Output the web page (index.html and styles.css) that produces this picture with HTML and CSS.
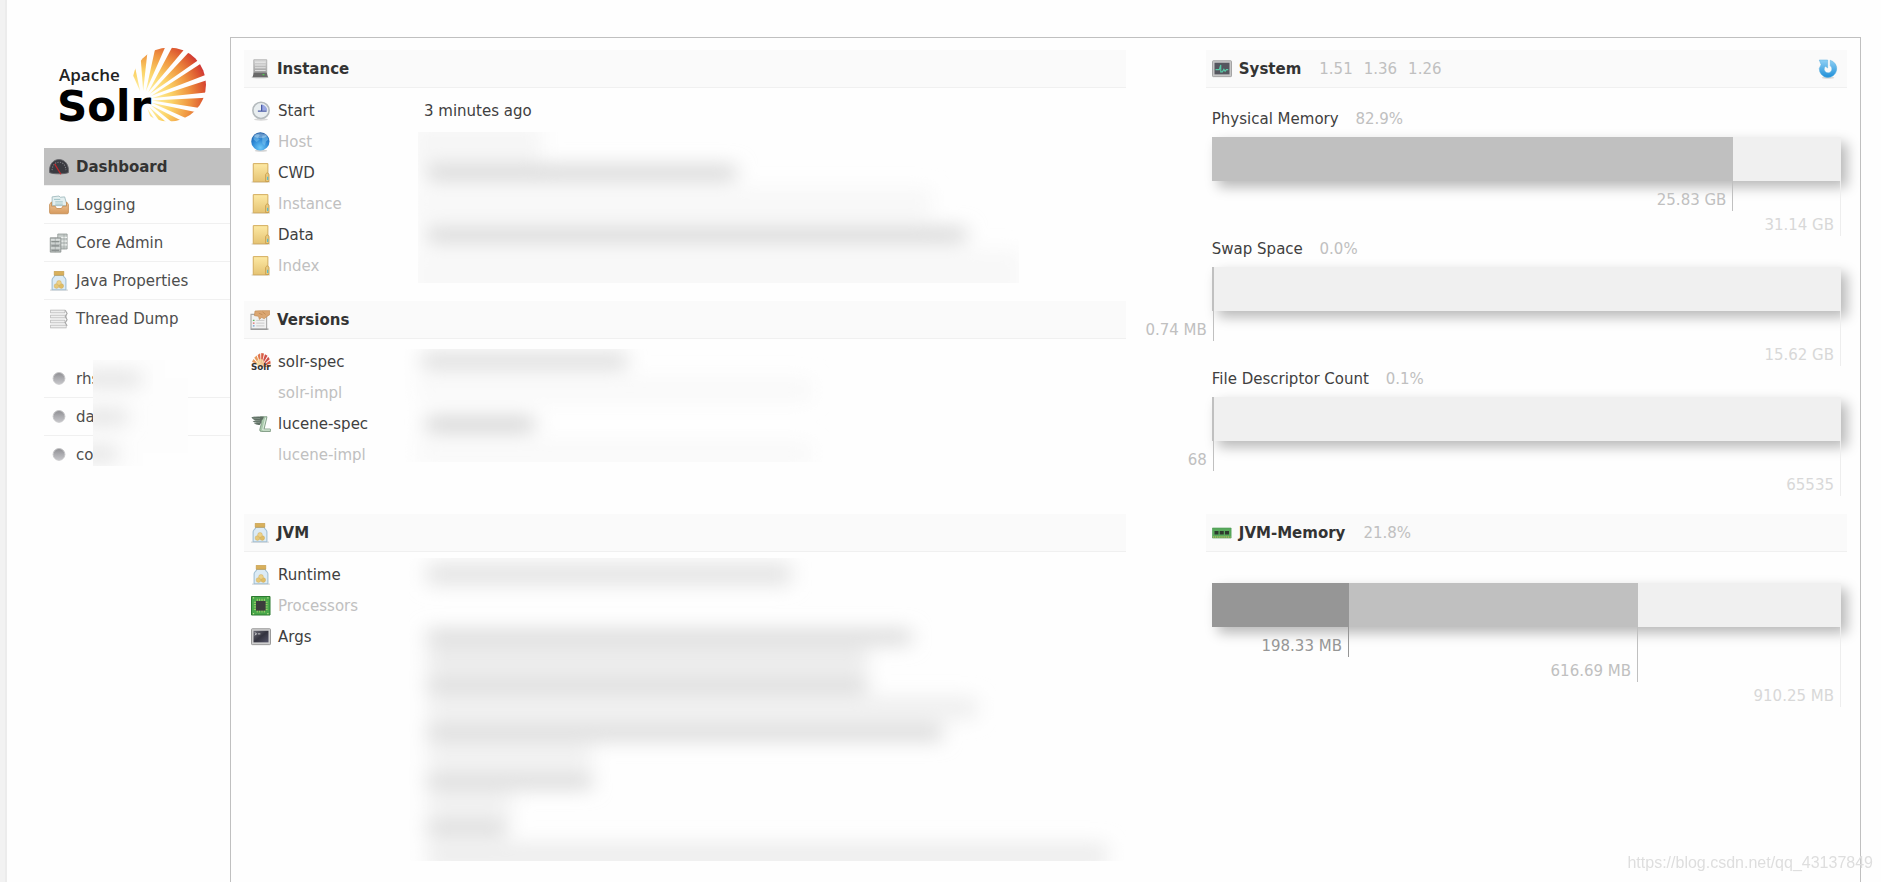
FILE: index.html
```html
<!DOCTYPE html>
<html lang="en">

<head>
    <meta charset="UTF-8">
    <meta name="viewport" content="width=device-width, initial-scale=1.0">
    <title>Solr Admin</title>
    <link rel="stylesheet" href="styles.css">
</head>

<body>

    <!-- icon sprite -->
    <svg class="sprite" width="0" height="0">
        <defs>
            <linearGradient id="g-folder" x1="0" y1="0" x2="0" y2="1"><stop offset="0" stop-color="#fde9a4"/><stop offset="1" stop-color="#e5c373"/></linearGradient>
            <linearGradient id="g-metal" x1="0" y1="0" x2="0" y2="1"><stop offset="0" stop-color="#dcdcdc"/><stop offset="1" stop-color="#9a9a9a"/></linearGradient>
            <linearGradient id="g-wood" x1="0" y1="0" x2="0" y2="1"><stop offset="0" stop-color="#f3c89b"/><stop offset="1" stop-color="#d69a5e"/></linearGradient>
            <linearGradient id="g-blue" x1="0" y1="0" x2="0" y2="1"><stop offset="0" stop-color="#8fd0f5"/><stop offset="1" stop-color="#1f8fd8"/></linearGradient>
            <radialGradient id="g-globe" cx=".5" cy=".85" r=".8"><stop offset="0" stop-color="#6cc8f8"/><stop offset=".6" stop-color="#2b86d4"/><stop offset="1" stop-color="#1d5fa8"/></radialGradient>
            <linearGradient id="g-dot" x1="0" y1="0" x2="0" y2="1"><stop offset="0" stop-color="#8e8e92"/><stop offset=".45" stop-color="#a9a9ad"/><stop offset="1" stop-color="#c6c6ca"/></linearGradient>
            <linearGradient id="g-screen" x1="0" y1="0" x2="1" y2="1"><stop offset="0" stop-color="#6b6b75"/><stop offset=".5" stop-color="#34343f"/><stop offset="1" stop-color="#55556a"/></linearGradient>
            <radialGradient id="g-sun" gradientUnits="userSpaceOnUse" cx="0" cy="0" r="72"><stop offset=".1" stop-color="#fff6b0"/><stop offset=".4" stop-color="#fbd266"/><stop offset=".65" stop-color="#ef9440"/><stop offset=".85" stop-color="#dc5530"/><stop offset="1" stop-color="#c41e3a"/></radialGradient>
            <filter id="f-soft" x="-20%" y="-30%" width="140%" height="160%"><feGaussianBlur stdDeviation="10 9"/></filter>
        </defs>

        <symbol id="i-server" viewBox="0 0 16 16">
            <ellipse cx="8" cy="14.6" rx="7" ry="1" fill="#d5d5d5"/>
            <path d="M3 .6h10.400v11H3z" fill="url(#g-metal)" stroke="#a5a5a5" stroke-width=".6"/>
            <path d="M4 2.600h8.500M4 4.800h8.500M4 7h8.500M4 9.200h8.500" stroke="#f2f2f2" stroke-width=".6"/>
            <path d="M3 11h10.400l1 3.600H2z" fill="#6a6a6a"/>
            <path d="M10 12.5h1.6" stroke="#4fd04f" stroke-width=".9"/>
        </symbol>
        <symbol id="i-clock" viewBox="0 0 16 16">
            <ellipse cx="8" cy="14.8" rx="5.5" ry=".9" fill="#d8d8d8"/>
            <circle cx="8" cy="7.5" r="6.500" fill="#e9eef0" stroke="#b4babd" stroke-width="1.300"/>
            <path d="M8.500 2.800A5 5 0 0 1 13 7.600H8.500z" fill="#9aa7e2"/>
            <path d="M8.500 3v5.500M5.500 8h7" fill="none" stroke="#4a5ba6" stroke-width="1"/>
        </symbol>
        <symbol id="i-globe" viewBox="0 0 16 16">
            <ellipse cx="8" cy="15" rx="5" ry=".8" fill="#d4d4d4"/>
            <circle cx="7.5" cy="7.5" r="7.3" fill="url(#g-globe)"/>
            <path d="M2 4c2-2.500 4-2.800 5-1.500l-1.500 2L7 6 4.500 8 2 6zM9 3l3.500-.5L14 6l-2 1.500-1 3.500-2-2V6z" fill="#7cc4f0" opacity=".55"/>
            <ellipse cx="7.500" cy="3" rx="5" ry="2" fill="#fff" opacity=".3"/>
        </symbol>
        <symbol id="i-folder" viewBox="0 0 16 16">
            <path d="M.5 15.200h14.500" stroke="#d0c8b8" stroke-width=".8"/>
            <path d="M1.800.5h11.700v14.500H1.800z" fill="url(#g-folder)" stroke="#d3ac5c" stroke-width=".8"/>
            <path d="M11.700 14.800V9.200c.7-1.900 2.700-1.300 2.700.3v5.300z" fill="#e9cb80" stroke="#c79d4c" stroke-width=".7"/>
            <path d="M13.300 11v2.500" stroke="#5bbccb" stroke-width="1"/>
        </symbol>
        <symbol id="i-gauge" viewBox="0 0 16 16">
            <path d="M.5 12.500C-.3 6 3.500 2 8 2s8.300 4 7.500 10.500c-3 1.300-12 1.300-15 0z" fill="#3a3a40" stroke="#66666a" stroke-width=".7"/>
            <path d="M2.500 10.500C2.600 6.500 5 4.200 8 4.200s5.400 2.300 5.500 6.300" fill="none" stroke="#7d7d83" stroke-width=".9" stroke-dasharray="1 1"/>
            <path d="M4.500 5.500l5 8.300" stroke="#c0282c" stroke-width="1"/>
        </symbol>
        <symbol id="i-inbox" viewBox="0 0 16 16">
            <path d="M2.500 1.500L8 .8l1 1 3.500-.3 2 7h-12z" fill="#e4eff0" stroke="#9fb9bd" stroke-width=".7"/>
            <path d="M4 3.500h5M5 5.500h6M5 7.300h6" stroke="#9fc3c6" stroke-width=".8"/>
            <path d="M.5 7.500L2 5.500V9h3l1 1.800h4L11 9h3V5.500l1.500 2V14q0 1-1 1h-13q-1 0-1-1z" fill="url(#g-wood)" stroke="#c68f56" stroke-width=".7"/>
        </symbol>
        <symbol id="i-cores" viewBox="0 0 16 16">
            <path d="M7 .8h7.500v12H7z" fill="#c2c8c6" stroke="#8f9694" stroke-width=".6"/>
            <path d="M7.500 3.500h7M7.500 6.500h7M7.500 9.500h7" stroke="#eef1f0" stroke-width=".9"/>
            <path d="M1 3.800h8.500v11.500H1z" fill="#b5bab9" stroke="#868c8a" stroke-width=".6"/>
            <path d="M1.500 5.500h7.500M1.500 8h7.500M1.500 12h7.500" stroke="#e8ebea" stroke-width=".9"/>
            <path d="M2 7h6M2 10.300h6M2 13.800h6" stroke="#7e8482" stroke-width=".8"/>
            <path d="M5 3.800v11.500M12 1v12" stroke="#8e9593" stroke-width=".4"/>
        </symbol>
        <symbol id="i-jar" viewBox="0 0 16 16">
            <path d="M.8 15.300h14.400" stroke="#d2d2d2" stroke-width=".8"/>
            <path d="M4.500 3.500h7c0 1.500 2 1.700 2 3.500v8h-11V7c0-1.800 2-2 2-3.500z" fill="#dcebf5" stroke="#a3c0d4" stroke-width=".9"/>
            <path d="M4.200.2h7.600v3.200H4.200z" fill="#d8b05c" stroke="#c19740" stroke-width=".5"/>
            <g stroke="#c9a24a" stroke-width=".3"><circle cx="6" cy="12" r="1.900" fill="#e6c878"/><circle cx="9.800" cy="12" r="1.900" fill="#dfbd66"/><circle cx="8" cy="9.500" r="1.900" fill="#ecd189"/></g>
        </symbol>
        <symbol id="i-threads" viewBox="0 0 16 16">
            <g fill="none" stroke="#b0b0b0" stroke-width="2.800"><path d="M1 2h12M1 6h13M1 10h12M1 14h13"/></g>
            <g fill="none" stroke="#efefef" stroke-width="1.700"><path d="M1.500 2h11M1.500 6h12M1.500 10h11M1.500 14h12"/></g>
            <path d="M13 1l1.500 2.500L13 6l1.500 2.500L13 11l1.500 2.500" fill="none" stroke="#a8a8a8" stroke-width=".9"/>
        </symbol>
        <symbol id="i-dot" viewBox="0 0 16 16">
            <circle cx="8" cy="7.500" r="4.700" fill="url(#g-dot)" stroke="#c6c6c8" stroke-width=".8"/>
        </symbol>
        <symbol id="i-versions" viewBox="0 0 16 16">
            <path d="M.8 3.500h12.500v12H.8z" fill="#f1f1f1" stroke="#a9a9a9" stroke-width=".9"/>
            <path d="M.8 15.300h14" stroke="#999" stroke-width="1"/>
            <path d="M5 8.300h6.500M5 10.500h6.500M5 12.700h6.500" stroke="#c5c5c5" stroke-width=".7"/>
            <path d="M2.300 8.300h1.300" stroke="#5ab85a"/><path d="M2.300 10.500h1.300" stroke="#d66"/><path d="M2.300 12.700h1.300" stroke="#69c"/>
            <path d="M4 .8l5-.3h6.800v3.200L13 5.500 11.500 7 9.300 6 7.500 7.500 6.800 5 3.500 4.500z" fill="#dba672" stroke="#c08a54" stroke-width=".5"/>
            <path d="M7 2.500l3 1.300M10 1.500l2.500 2" stroke="#b57e48" stroke-width=".5"/>
        </symbol>
        <symbol id="i-solr" viewBox="0 0 16 16">
            <g fill="#e89a5c"><path d="M8 12L.8 7.800 2 5.500z"/><path d="M8 12L2.600 4.500l1.900-1.700z"/><path d="M8 12L5.300 2.300 7.300 1z" fill="#e0764c"/><path d="M8 12L8.200.8l2.200.3z" fill="#d85e44"/><path d="M8 12l3.200-10.300 2 1.300z" fill="#d05048"/><path d="M8 12l5.800-8.200 1.200 2z" fill="#d05048"/><path d="M8 12l7.300-5.200.5 2.300z" fill="#d85e44"/><path d="M8 12l7.800-2v2z"/></g>
            <circle cx="7.500" cy="8.800" r="3.300" fill="#fbe3a5" opacity=".7"/>
            <text x="0" y="14" class="mini-logo">Solr</text>
        </symbol>
        <symbol id="i-lucene" viewBox="0 0 16 16">
            <path d="M7.500 2.200h5.300L10.500 12h5v2H8.300q-1.500 0-1.300-1.500l1.300-5z" fill="#a9c9ab" stroke="#6f8c73" stroke-width=".6"/>
            <path d="M.3 2.500q4-.9 10-.3-.3 1.800-1.800 3-.3 3-1.500 3.500Q4.500 9 2.300 7.500l2.500-.3Q2.500 7 1.300 5.500l2.500.1Q1.500 4.500.3 2.500z" fill="#5f6f64"/>
            <path d="M1.300 3.200l6 .5M2.300 5l5 .5M3 6.500l4 .3" stroke="#a3b3a6" stroke-width=".4"/>
            <path d="M11.800 2.800l-2.500 10h6" fill="none" stroke="#e4f0e4" stroke-width=".7"/>
        </symbol>
        <symbol id="i-cpu" viewBox="0 0 16 16">
            <path d="M.4.400h14.800v14.800H.4z" fill="#49a84b" stroke="#2c7a30" stroke-width=".8"/>
            <path d="M5 2.200v11M6.900 2.200v11M8.800 2.200v11M10.700 2.200v11M2.300 5h11M2.300 6.900h11M2.300 8.800h11M2.300 10.700h11" stroke="#c3d874" stroke-width=".6"/>
            <path d="M4 4h7.700v7.700H4z" fill="#3c3c3c"/>
            <path d="M1.500 1.500h1M13 1.500h1M1.500 14h1M13 14h1" stroke="#bfe08a"/>
        </symbol>
        <symbol id="i-terminal" viewBox="0 0 16 16">
            <rect x=".4" y="1.400" width="15.200" height="12.700" rx=".6" fill="#cfcfcf" stroke="#9a9a9a" stroke-width=".8"/>
            <path d="M2 3h12v9.300H2z" fill="url(#g-screen)"/>
            <path d="M3 4.500l1.500 1L3 6.500M5.500 5.500h2" fill="none" stroke="#ddd" stroke-width=".7"/>
        </symbol>
        <symbol id="i-system" viewBox="0 0 16 16">
            <rect x=".4" y="1.400" width="15.200" height="12.700" rx=".6" fill="#c6c6c6" stroke="#a4a4a4" stroke-width=".8"/>
            <path d="M2 3h12v9.300H2z" fill="#55565e"/>
            <path d="M2.800 8.500h3L7 4.800v5.500h1.300l1.200-2 1 1.500 1-1.300H13" fill="none" stroke="#58c8a6" stroke-width=".9"/>
        </symbol>
        <symbol id="i-ram" viewBox="0 0 16 16">
            <path d="M.3 4h15v8H.3z" fill="#58aa5c" stroke="#4d9a54" stroke-width=".5"/>
            <path d="M2 6.300h3.200v2.800H2zM6.200 6.300h3.200v2.800H6.200zM10.400 6.300h3.200v2.800h-3.200z" fill="#2d3a2e"/>
            <path d="M.8 11.200h14" stroke="#b3b860" stroke-width="1.300" stroke-dasharray=".9 .6"/>
        </symbol>
        <symbol id="i-reload" viewBox="0 0 16 16">
            <ellipse cx="8" cy="15" rx="5" ry=".8" fill="#d8d8d8"/>
            <path d="M9.800 1A7 7 0 1 1 1 7.500L2.500 4.500 1 .8h6.700v6.400L6 5.800Q4.700 7 5 8.600a3.100 3.100 0 1 0 4.800-3.200z" fill="url(#g-blue)" stroke="#58aede" stroke-width=".4"/>
        </symbol>
    </svg>

    <div class="page">
        <aside class="sidebar">
            <a class="logo" href="#">
                <svg width="150" height="90" viewBox="0 0 150 90" role="img" aria-label="Apache Solr">
                    <clipPath id="sun-clip"><circle cx="112" cy="37.500" r="37"/></clipPath>
                    <g clip-path="url(#sun-clip)">
                        <g transform="translate(86 53)" fill="url(#g-sun)">
                            <path d="M9 0L90 -8.500V8.500z" transform="rotate(-108)"/>
                            <path d="M9 0L90 -7.500V7.500z" transform="rotate(-89)"/>
                            <path d="M9 0L90 -8V8z" transform="rotate(-72)"/>
                            <path d="M9 0L90 -8.500V8.500z" transform="rotate(-56)"/>
                            <path d="M9 0L90 -8.500V8.500z" transform="rotate(-41)"/>
                            <path d="M9 0L90 -8.500V8.500z" transform="rotate(-27)"/>
                            <path d="M9 0L90 -8.500V8.500z" transform="rotate(-12)"/>
                            <path d="M9 0L90 -8.500V8.500z" transform="rotate(3)"/>
                            <path d="M9 0L90 -8.500V8.500z" transform="rotate(18)"/>
                            <path d="M9 0L90 -8.500V8.500z" transform="rotate(33)"/>
                            <path d="M9 0L90 -8.500V8.500z" transform="rotate(48)"/>
                            <path d="M9 0L90 -8.500V8.500z" transform="rotate(63)"/>
                        </g>
                    </g>
                    <text x="2" y="34" class="logo-apache">Apache</text>
                    <text x="0" y="74" class="logo-solr">Solr</text>
                </svg>
            </a>

            <nav>
                <ul class="menu">
                    <li class="active"><a href="#"><svg class="icon"><use href="#i-gauge"/></svg>Dashboard</a></li>
                    <li><a href="#logging"><svg class="icon"><use href="#i-inbox"/></svg>Logging</a></li>
                    <li><a href="#cores"><svg class="icon"><use href="#i-cores"/></svg>Core Admin</a></li>
                    <li><a href="#properties"><svg class="icon"><use href="#i-jar"/></svg>Java Properties</a></li>
                    <li><a href="#threads"><svg class="icon"><use href="#i-threads"/></svg>Thread Dump</a></li>
                </ul>
                <ul class="menu cores">
                    <li><a href="#rhs"><svg class="icon"><use href="#i-dot"/></svg>rhs</a></li>
                    <li><a href="#da"><svg class="icon"><use href="#i-dot"/></svg>da</a></li>
                    <li><a href="#co"><svg class="icon"><use href="#i-dot"/></svg>co</a></li>
                    <li class="cover" aria-hidden="true">
                        <svg width="95" height="106">
                            <path d="M0 0h72v18h23v75H50v13H0z" fill="#fdfdfd"/>
                            <g filter="url(#f-soft)" fill="#e6e6e6">
                                <rect x="-12" y="10" width="60" height="18"/>
                                <rect x="-12" y="48" width="46" height="18"/>
                                <rect x="-12" y="85" width="36" height="18"/>
                            </g>
                        </svg>
                    </li>
                </ul>
            </nav>
        </aside>

        <main class="content">
            <div class="column">
                <section class="block">
                    <h2><svg class="icon"><use href="#i-server"/></svg>Instance</h2>
                    <dl class="list">
                        <dt><svg class="icon"><use href="#i-clock"/></svg>Start</dt>
                        <dd>3 minutes ago</dd>
                        <dt class="odd"><svg class="icon"><use href="#i-globe"/></svg>Host</dt>
                        <dt><svg class="icon"><use href="#i-folder"/></svg>CWD</dt>
                        <dt class="odd"><svg class="icon"><use href="#i-folder"/></svg>Instance</dt>
                        <dt><svg class="icon"><use href="#i-folder"/></svg>Data</dt>
                        <dt class="odd"><svg class="icon"><use href="#i-folder"/></svg>Index</dt>
                        <dd class="hidden-values paths">
                            <svg width="601" height="151" aria-hidden="true">
                                <g filter="url(#f-soft)">
                                    <rect x="-6" y="-8" width="130" height="40" fill="#f6f6f6"/>
                                    <rect x="8" y="32" width="310" height="18" fill="#dcdcdc"/>
                                    <rect x="-6" y="56" width="520" height="34" fill="#f8f8f8"/>
                                    <rect x="8" y="94" width="540" height="18" fill="#dcdcdc"/>
                                    <rect x="-6" y="118" width="610" height="50" fill="#f8f8f8"/>
                                </g>
                            </svg>
                        </dd>
                    </dl>
                </section>

                <section class="block">
                    <h2><svg class="icon"><use href="#i-versions"/></svg>Versions</h2>
                    <dl class="list">
                        <dt><svg class="icon"><use href="#i-solr"/></svg>solr-spec</dt>
                        <dt class="odd"><svg class="icon"></svg>solr-impl</dt>
                        <dt><svg class="icon"><use href="#i-lucene"/></svg>lucene-spec</dt>
                        <dt class="odd"><svg class="icon"></svg>lucene-impl</dt>
                        <dd class="hidden-values versions">
                            <svg width="460" height="113" aria-hidden="true">
                                <g filter="url(#f-soft)">
                                    <rect x="18" y="2" width="205" height="20" fill="#e2e2e2"/>
                                    <rect x="12" y="28" width="396" height="26" fill="#f9f9f9"/>
                                    <rect x="22" y="66" width="108" height="19" fill="#dadada"/>
                                    <rect x="12" y="92" width="396" height="26" fill="#f9f9f9"/>
                                </g>
                            </svg>
                        </dd>
                    </dl>
                </section>
            </div>

            <section class="block">
                <h2>
                    <svg class="icon"><use href="#i-system"/></svg>System
                    <span class="stats"><span>1.51</span><span>1.36</span><span>1.26</span></span>
                    <button class="reload" type="button" aria-label="Reload"><svg class="icon"><use href="#i-reload"/></svg></button>
                </h2>
                <div class="devices">
                    <div class="device">
                        <p>Physical Memory <span>82.9%</span></p>
                        <div class="bar">
                            <div class="total"><div class="fill"></div><div class="val"><span>31.14 GB</span></div></div>
                            <div class="used" style="width: 82.9%"><div class="fill"></div><div class="val"><span>25.83 GB</span></div></div>
                        </div>
                    </div>
                    <div class="device">
                        <p>Swap Space <span>0.0%</span></p>
                        <div class="bar">
                            <div class="total"><div class="fill"></div><div class="val"><span>15.62 GB</span></div></div>
                            <div class="used" style="width: 0%"><div class="fill"></div><div class="val"><span>0.74 MB</span></div></div>
                        </div>
                    </div>
                    <div class="device">
                        <p>File Descriptor Count <span>0.1%</span></p>
                        <div class="bar">
                            <div class="total"><div class="fill"></div><div class="val"><span>65535</span></div></div>
                            <div class="used" style="width: 0.1%"><div class="fill"></div><div class="val"><span>68</span></div></div>
                        </div>
                    </div>
                </div>
            </section>

            <section class="block">
                <h2><svg class="icon"><use href="#i-jar"/></svg>JVM</h2>
                <dl class="list">
                    <dt><svg class="icon"><use href="#i-jar"/></svg>Runtime</dt>
                    <dt class="odd"><svg class="icon"><use href="#i-cpu"/></svg>Processors</dt>
                    <dt><svg class="icon"><use href="#i-terminal"/></svg>Args</dt>
                    <dd class="hidden-values args">
                        <svg width="720" height="303" aria-hidden="true">
                            <g filter="url(#f-soft)">
                                <rect x="18" y="4" width="364" height="24" fill="#e6e6e6"/>
                                <rect x="18" y="70" width="484" height="18" fill="#dfdfdf"/>
                                <rect x="18" y="90" width="440" height="24" fill="#ebebeb"/>
                                <rect x="18" y="118" width="440" height="18" fill="#dedede"/>
                                <rect x="18" y="138" width="550" height="24" fill="#f0f0f0"/>
                                <rect x="18" y="165" width="515" height="19" fill="#dfdfdf"/>
                                <rect x="18" y="186" width="165" height="24" fill="#f1f1f1"/>
                                <rect x="18" y="214" width="165" height="18" fill="#dedede"/>
                                <rect x="18" y="234" width="85" height="24" fill="#f1f1f1"/>
                                <rect x="18" y="261" width="80" height="18" fill="#dedede"/>
                                <rect x="18" y="284" width="680" height="28" fill="#eee"/>
                            </g>
                        </svg>
                    </dd>
                </dl>
            </section>

            <section class="block">
                <h2>
                    <svg class="icon"><use href="#i-ram"/></svg>JVM-Memory
                    <span class="stats"><span>21.8%</span></span>
                </h2>
                <div class="devices memory">
                    <div class="bar">
                        <div class="total"><div class="fill"></div><div class="val"><span>910.25 MB</span></div></div>
                        <div class="committed" style="width: 67.75%"><div class="fill"></div><div class="val"><span>616.69 MB</span></div></div>
                        <div class="used" style="width: 21.8%"><div class="fill"></div><div class="val"><span>198.33 MB</span></div></div>
                    </div>
                </div>
            </section>
        </main>
    </div>

    <div class="watermark">https://blog.csdn.net/qq_43137849</div>

</body>

</html>
```

FILE: styles.css
```css
* {
    box-sizing: border-box;
}

body {
    margin: 0;
    border-left: 5px solid #f2f2f2;
    background-color: #fefefe;
    color: #404040;
    font-family: Verdana, "DejaVu Sans", sans-serif;
    font-size: 15px;
    line-height: 22px;
}

ul, dl, dd, p, h2 {
    margin: 0;
    padding: 0;
}

ul {
    list-style: none;
}

a {
    color: #4d4d4d;
    text-decoration: none;
}

.sprite {
    position: absolute;
}

.icon {
    flex: none;
    width: 20px;
    height: 20px;
}

.page {
    display: flex;
    min-height: 100vh;
    padding: 37px 20px 0 37px;
    border-left: 2px solid #ececec;
}

/* sidebar */

.sidebar {
    flex: none;
    width: 186px;
    padding-top: 10px;
}

.logo {
    display: block;
    height: 101px;
    padding-left: 13px;
}

.logo svg {
    display: block;
}

.logo-apache {
    font: 600 17px "Open Sans", sans-serif;
    fill: #222;
}

.logo-solr {
    font: bold 42px "DejaVu Sans", sans-serif;
    fill: #000;
}

.mini-logo {
    font: bold 7px "DejaVu Sans", sans-serif;
    fill: #333;
}

.menu li {
    border-bottom: 1px solid #f0f0f0;
}

.menu a {
    display: flex;
    align-items: center;
    gap: 7px;
    height: 37px;
    padding-left: 5px;
}

.menu .active {
    background-color: #c0c0c0;
}

.menu .active a {
    color: #333;
    font-weight: bold;
}

.menu li:nth-child(5),
.cores li:nth-child(n+3) {
    border-bottom: 0;
}

.cores {
    position: relative;
    margin-top: 23px;
}

.cores .cover {
    position: absolute;
    top: 0;
    left: 49px;
}

/* content */

.content {
    flex: 1;
    display: grid;
    grid-template-columns: 55% 40%;
    grid-template-rows: auto 1fr;
    justify-content: space-between;
    row-gap: 16px;
    padding: 12px 13px 0;
    border: 1px solid #c0c0c0;
    border-bottom: 0;
}

.column {
    display: flex;
    flex-direction: column;
    gap: 20px;
}

.block h2 {
    display: flex;
    align-items: center;
    gap: 7px;
    height: 38px;
    padding: 0 9px 0 6px;
    border-bottom: 1px solid #f0f0f0;
    background-color: #fafafa;
    color: #333;
    font-size: 15px;
}

.stats {
    display: flex;
    gap: 11px;
    margin-left: 11px;
    color: #c0c0c0;
    font-weight: normal;
}

.reload {
    display: flex;
    margin-left: auto;
    padding: 0;
    border: 0;
    background: none;
    cursor: pointer;
}

.list {
    display: grid;
    grid-template-columns: 173px 1fr;
    grid-auto-rows: 31px;
    padding: 7px 0 0 7px;
}

.list dt {
    grid-column: 1;
    display: flex;
    align-items: center;
    gap: 7px;
}

.list dd {
    grid-column: 2;
    align-self: center;
}

.list .odd {
    color: #c0c0c0;
}

/* blurred values sit beside their labels */

.list .hidden-values {
    align-self: start;
}

.hidden-values svg {
    display: block;
    max-width: 100%;
    overflow: hidden;
}

.paths {
    grid-row: 2 / span 5;
    margin: 6px 0 0 -6px;
}

.versions {
    grid-row: 1 / span 4;
    margin: 3px 0 0 -20px;
}

.args {
    grid-row: 1 / span 10;
    margin: -1px 0 0 -15px;
}

/* memory bars */

.devices {
    padding: 20px 6px 0;
}

.memory {
    padding-top: 31px;
}

.device {
    padding-bottom: 2px;
}

.device p {
    margin-bottom: 7px;
}

.device p span {
    margin-left: 12px;
    color: #c0c0c0;
}

.bar {
    display: grid;
}

.bar > div {
    grid-area: 1 / 1;
    min-width: 2px;
}

.fill {
    height: 44px;
}

.val {
    display: flex;
    justify-content: flex-end;
    align-items: flex-end;
    height: 30px;
    border-right: 1px solid;
    white-space: nowrap;
}

.val span {
    margin-right: 6px;
}

.total .fill {
    background-color: #f0f0f0;
    box-shadow: 6px 6px 12px #b8b8b8;
}

.total .val {
    height: 55px;
    border-color: #eee;
    color: #d8d8d8;
}

.used .fill,
.committed .fill {
    background-color: #c0c0c0;
}

.used .val,
.committed .val {
    color: #c0c0c0;
}

.memory .used .fill {
    background-color: #969696;
}

.memory .used .val {
    color: #969696;
}

.memory .committed .val {
    height: 55px;
}

.memory .total .val {
    height: 80px;
}

.watermark {
    position: fixed;
    right: 8px;
    bottom: 8px;
    color: #dedede;
    font: 16px/22px "Liberation Sans", sans-serif;
}
```
